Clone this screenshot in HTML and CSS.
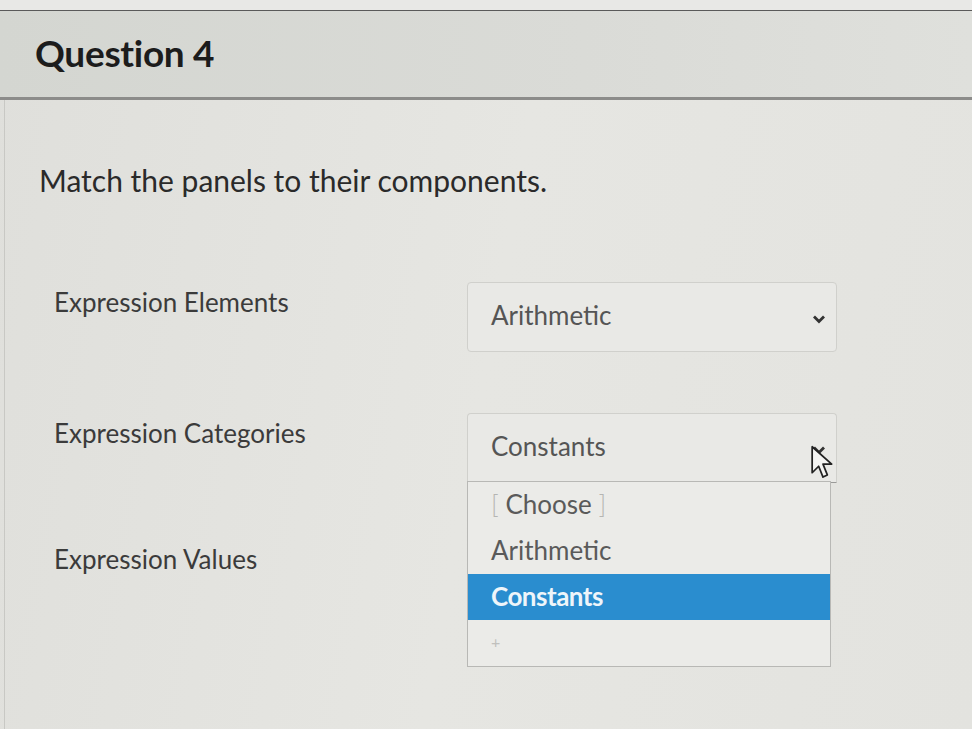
FILE: index.html
```html
<!DOCTYPE html>
<html>
<head>
<meta charset="utf-8">
<link rel="stylesheet" href="styles.css">
</head>
<body>
<div class="topstrip"></div>
<header class="qhead"><h1 class="qtitle">Question 4</h1></header>
<main class="content">
  <p class="prompt">Match the panels to their components.</p>
  <div class="rows">
    <div class="row">
      <div class="label">Expression Elements</div>
      <div class="select">
        <span class="sel-text">Arithmetic</span>
        <svg class="chev" width="14" height="10" viewBox="0 0 14 10"><path d="M2 2.5 L7 7.5 L12 2.5" fill="none" stroke="#333" stroke-width="2.8"/></svg>
      </div>
    </div>
    <div class="row row2">
      <div class="label">Expression Categories</div>
      <div class="select open">
        <span class="sel-text">Constants</span>
        <svg class="chev" width="14" height="10" viewBox="0 0 14 10"><path d="M2 2.5 L7 7.5 L12 2.5" fill="none" stroke="#333" stroke-width="2.8"/></svg>
        <ul class="dropdown">
          <li class="opt"><span class="brk">[</span> Choose <span class="brk">]</span></li>
          <li class="opt">Arithmetic</li>
          <li class="opt active">Constants</li>
          <li class="opt faint">+</li>
        </ul>
        <svg class="cursor" width="26" height="38" viewBox="0 0 24 34"><path d="M2 2 L2 26 L8 20 L12 30 L16 28 L12 18 L20 18 Z" fill="#f4f4f2" stroke="#222" stroke-width="1.6" stroke-linejoin="round"/></svg>
      </div>
    </div>
    <div class="row row3">
      <div class="label">Expression Values</div>
      <div class="spacer"></div>
    </div>
  </div>
</main>
</body>
</html>
```
FILE: styles.css
```css
html, body {
  margin: 0;
  padding: 0;
}
body {
  width: 972px;
  height: 729px;
  overflow: hidden;
  background: linear-gradient(100deg, #dfdfdb 0%, #e6e6e2 50%, #e3e3df 100%);
  font-family: Lato, "Open Sans", sans-serif;
  color: #333;
}
.topstrip {
  height: 10px;
  background: #e8e8e6;
  border-bottom: 1px solid #5a5a5a;
}
.qhead {
  height: 86px;
  background: linear-gradient(90deg, #d4d6d1 0%, #dadbd7 60%, #dfe0dc 100%);
  border-bottom: 3px solid #8c8c8a;
  display: flex;
  align-items: center;
  padding-left: 35px;
}
.qtitle {
  margin: 0;
  font-size: 37px;
  font-weight: 700;
  color: #1c1c1c;
  letter-spacing: -0.3px;
  position: relative;
  top: -2px;
}
.content {
  box-sizing: border-box;
  height: 629px;
  margin-left: 4px;
  padding-left: 34px;
  border-left: 1px solid #c8c8c4;
}
.prompt {
  margin: 0;
  padding-top: 62px;
  font-size: 30px;
  line-height: 36px;
  color: #2a2a2a;
}
.rows {
  margin-top: 84px;
  display: flex;
  flex-direction: column;
}
.row {
  display: grid;
  grid-template-columns: 428px 370px;
  height: 70px;
}
.row2 {
  margin-top: 61px;
}
.row3 {
  margin-top: 56px;
}
.label {
  padding-left: 15px;
  padding-top: 5px;
  font-size: 26px;
  line-height: 30px;
  color: #3b3b3b;
}
.select {
  position: relative;
  box-sizing: border-box;
  height: 70px;
  border: 1px solid #d0d0cc;
  border-radius: 4px;
  background: #e9e9e6;
  display: flex;
  align-items: center;
  padding-left: 23px;
  font-size: 26px;
  color: #555;
}
.select.open {
  border-bottom: 1px solid #9a9a98;
  border-radius: 4px 4px 0 0;
}
.sel-text {
  position: relative;
  top: -2px;
}
.chev {
  position: absolute;
  right: 10px;
  top: 31px;
}
.dropdown {
  position: absolute;
  left: -1px;
  top: 67px;
  width: 362px;
  margin: 0;
  padding: 0;
  list-style: none;
  border: 1px solid #b8b8b5;
  background: #ebebe8;
  font-size: 26px;
}
.opt {
  height: 46px;
  line-height: 44px;
  padding-left: 23px;
  color: #5a5a5a;
}
.opt .brk {
  color: #b5b5b2;
  font-weight: 300;
}
.opt.active {
  background: #2a8dcf;
  color: #eef5fa;
  font-weight: 700;
  letter-spacing: -0.5px;
}
.opt.faint {
  color: #c0c0bd;
  font-size: 16px;
}
.cursor {
  position: absolute;
  left: 342px;
  top: 30px;
}
```
